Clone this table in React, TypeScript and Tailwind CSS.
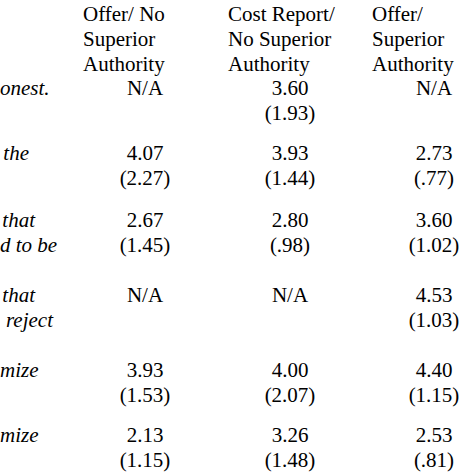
import React from "react";

type Row = {
  height: string;
  label: { text: string; pr: string }[];
  values: [string[], string[], string[]];
};

// the left column is the right end of a wider table; only its visible tail is kept
const rows: Row[] = [
  {
    height: "h-[65px]",
    label: [{ text: "onest.", pr: "pr-[40px]" }],
    values: [["N/A"], ["3.60", "(1.93)"], ["N/A"]],
  },
  {
    height: "h-[67px]",
    label: [{ text: "the", pr: "pr-[54px]" }],
    values: [["4.07", "(2.27)"], ["3.93", "(1.44)"], ["2.73", "(.77)"]],
  },
  {
    height: "h-[75px]",
    label: [
      { text: "that", pr: "pr-[48px]" },
      { text: "d to be", pr: "pr-[26px]" },
    ],
    values: [["2.67", "(1.45)"], ["2.80", "(.98)"], ["3.60", "(1.02)"]],
  },
  {
    height: "h-[75px]",
    label: [
      { text: "that", pr: "pr-[48px]" },
      { text: "reject", pr: "pr-[30px]" },
    ],
    values: [["N/A"], ["N/A"], ["4.53", "(1.03)"]],
  },
  {
    height: "h-[65px]",
    label: [{ text: "mize", pr: "pr-[45px]" }],
    values: [["3.93", "(1.53)"], ["4.00", "(2.07)"], ["4.40", "(1.15)"]],
  },
  {
    height: "h-[52px]",
    label: [{ text: "mize", pr: "pr-[45px]" }],
    values: [["2.13", "(1.15)"], ["3.26", "(1.48)"], ["2.53", "(.81)"]],
  },
];

const headers = [
  ["Offer/ No", "Superior", "Authority"],
  ["Cost Report/", "No Superior", "Authority"],
  ["Offer/", "Superior", "Authority"],
];

const grid = "grid grid-cols-[83px_145px_144px_102px]";

export default function App() {
  return (
    <div className="h-[474px] w-[474px] overflow-hidden bg-white pt-[2px] font-['Liberation_Serif',serif] text-[21px] leading-[24.8px] text-black">
      <div className={`${grid} h-[74.4px]`}>
        <div />
        {headers.map((lines, i) => (
          <div key={i} className="whitespace-nowrap">
            {lines.map((l) => (
              <div key={l}>{l}</div>
            ))}
          </div>
        ))}
      </div>

      {rows.map((row, i) => (
        <div key={i} className={`${grid} ${row.height}`}>
          <div className="italic">
            {row.label.map((l, j) => (
              <div key={j} className={`whitespace-nowrap text-right ${l.pr}`}>
                {l.text}
              </div>
            ))}
          </div>
          {row.values.map((v, j) => (
            <div key={j} className="w-[124px] text-center">
              {v.map((t) => (
                <div key={t}>{t}</div>
              ))}
            </div>
          ))}
        </div>
      ))}
    </div>
  );
}
